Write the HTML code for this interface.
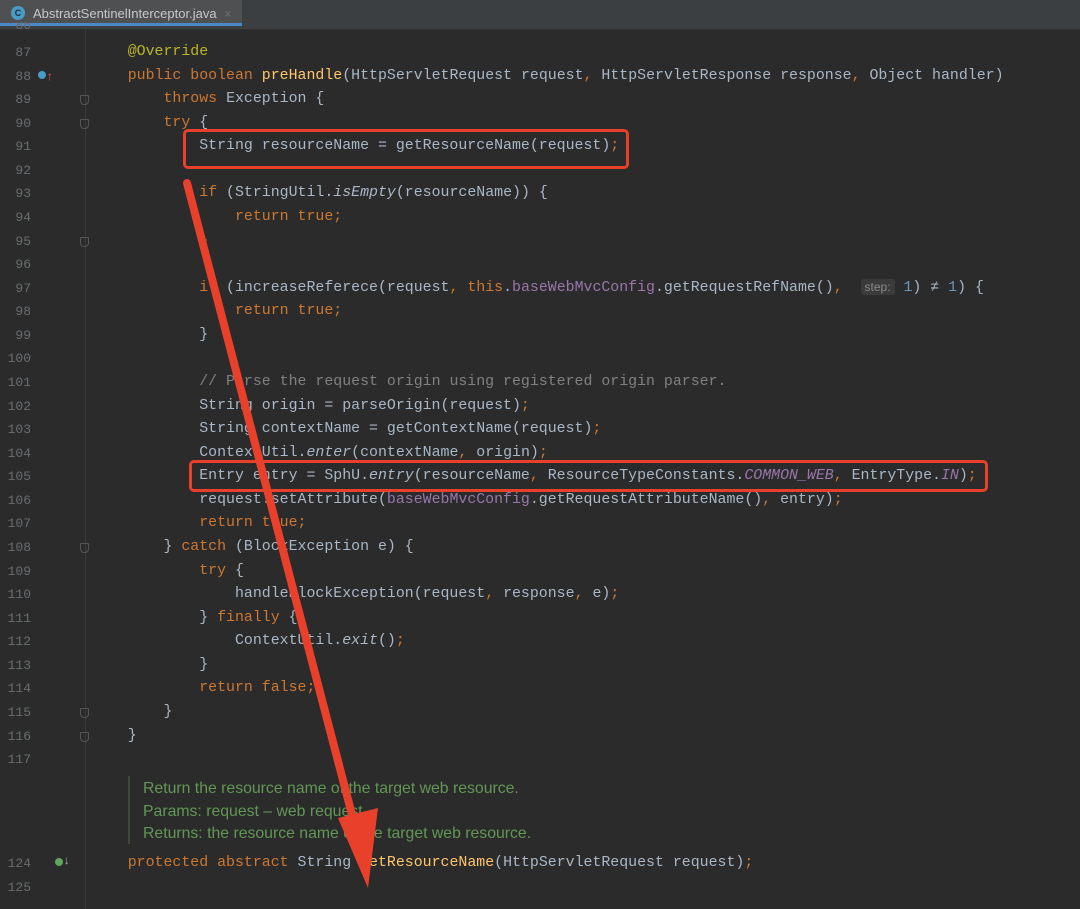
<!DOCTYPE html>
<html><head><meta charset="utf-8"><style>
body{margin:0;width:1080px;height:909px;background:#2b2b2b;overflow:hidden;position:relative;font-family:"Liberation Mono",monospace;}
.tabbar{position:absolute;left:0;top:0;width:1080px;height:29px;background:#3c3f41;border-bottom:1px solid #323232;}
.tab{position:absolute;left:0;top:0;width:242px;height:26px;background:#4e5052;border-bottom:3px solid #4a88c7;font-family:"Liberation Sans",sans-serif;font-size:13px;color:#c8c8c8;line-height:27px;padding-left:33px;box-sizing:border-box;}
.tab .ic{position:absolute;left:11px;top:6px;width:14px;height:14px;border-radius:50%;background:#4a9cc7;color:#1e2a33;font-size:9px;line-height:14px;text-align:center;font-weight:bold}
.tab .x{position:absolute;left:224px;color:#6e6e6e}
.gut{position:absolute;left:85px;top:29px;width:1px;height:880px;background:#3a3a3a}
.ln{position:absolute;left:0;width:31px;text-align:right;color:#6a6d70;font-size:13px;}
.l{position:absolute;left:128px;white-space:pre;font-size:14.9px;color:#a9b7c6;}
.k{color:#cc7832}.m{color:#ffc66d}.f{color:#9876aa}.n{color:#6897bb}.c{color:#808080}.a{color:#bbb529}.i{font-style:italic}.fi{color:#9876aa;font-style:italic}
.hint{font-family:"Liberation Sans",sans-serif;font-size:12px;color:#8a8a8a;background:#3b3b3b;border-radius:3px;padding:1px 4px;}
.doc{position:absolute;left:143px;font-family:"Liberation Sans",sans-serif;font-size:15.8px;color:#629755;}
.box{position:absolute;border:3px solid #e8402a;border-radius:5px;}
.fold{position:absolute;left:80px;width:9px;height:10px;border:1px solid #555;border-radius:1px 1px 4px 4px;box-sizing:border-box}
</style></head><body>
<div class="tabbar"><div class="tab"><span class="ic">C</span>AbstractSentinelInterceptor.java<span class="x">×</span></div></div>
<div class="gut"></div>
<div id="code"></div>
<div style="position:absolute;left:128px;top:776px;width:2px;height:68px;background:#3f4a3a"></div>
<div class="doc" style="top:780px">Return the resource name of the target web resource.</div>
<div class="doc" style="top:803px">Params:  request – web request</div>
<div class="doc" style="top:825px">Returns: the resource name of the target web resource.</div>
<div class="box" style="left:183px;top:129px;width:440px;height:34px"></div>
<div class="box" style="left:189px;top:460px;width:793px;height:26px"></div>
<svg style="position:absolute;left:0;top:0" width="1080" height="909">
<line x1="187" y1="183" x2="356" y2="830" stroke="#e8402a" stroke-width="8" stroke-linecap="round"/>
<polygon points="368,888 338,818 378,808" fill="#e8402a"/>
</svg>
<script>
const L=[
[87,'    <span class="a">@Override</span>'],
[88,'    <span class="k">public boolean </span><span class="m">preHandle</span>(HttpServletRequest request<span class="k">, </span>HttpServletResponse response<span class="k">, </span>Object handler)'],
[89,'        <span class="k">throws </span>Exception {'],
[90,'        <span class="k">try </span>{'],
[91,'            String resourceName = getResourceName(request)<span class="k">;</span>'],
[92,''],
[93,'            <span class="k">if </span>(StringUtil.<span class="i">isEmpty</span>(resourceName)) {'],
[94,'                <span class="k">return true;</span>'],
[95,'            }'],
[96,''],
[97,'            <span class="k">if </span>(increaseReferece(request<span class="k">, this</span>.<span class="f">baseWebMvcConfig</span>.getRequestRefName()<span class="k">,</span>  <span class="hint">step:</span> <span class="n">1</span>) ≠ <span class="n">1</span>) {'],
[98,'                <span class="k">return true;</span>'],
[99,'            }'],
[100,''],
[101,'            <span class="c">// Parse the request origin using registered origin parser.</span>'],
[102,'            String origin = parseOrigin(request)<span class="k">;</span>'],
[103,'            String contextName = getContextName(request)<span class="k">;</span>'],
[104,'            ContextUtil.<span class="i">enter</span>(contextName<span class="k">, </span>origin)<span class="k">;</span>'],
[105,'            Entry entry = SphU.<span class="i">entry</span>(resourceName<span class="k">, </span>ResourceTypeConstants.<span class="fi">COMMON_WEB</span><span class="k">, </span>EntryType.<span class="fi">IN</span>)<span class="k">;</span>'],
[106,'            request.setAttribute(<span class="f">baseWebMvcConfig</span>.getRequestAttributeName()<span class="k">, </span>entry)<span class="k">;</span>'],
[107,'            <span class="k">return true;</span>'],
[108,'        } <span class="k">catch </span>(BlockException e) {'],
[109,'            <span class="k">try </span>{'],
[110,'                handleBlockException(request<span class="k">, </span>response<span class="k">, </span>e)<span class="k">;</span>'],
[111,'            } <span class="k">finally </span>{'],
[112,'                ContextUtil.<span class="i">exit</span>()<span class="k">;</span>'],
[113,'            }'],
[114,'            <span class="k">return false;</span>'],
[115,'        }'],
[116,'    }'],
[117,'']];
let h='<div class="ln" style="top:22px;height:8px;overflow:hidden;line-height:8px">86</div>';
L.forEach(([n,t])=>{const y=52+(n-87)*23.57;
h+=`<div class="ln" style="top:${y-7}px">${n}</div><div class="l" style="top:${y-8}px;left:92px">${t}</div>`;});
h+=`<div class="ln" style="top:856px">124</div><div class="l" style="top:855px;left:92px">    <span class="k">protected abstract </span>String <span class="m">getResourceName</span>(HttpServletRequest request)<span class="k">;</span></div>`;
h+=`<div class="ln" style="top:880px">125</div>`;
h+='<div style="position:absolute;left:38px;top:71px;width:8px;height:8px;border-radius:50%;background:#4a9cc7"></div><div style="position:absolute;left:46px;top:70px;color:#e05555;font-size:12px">↑</div>';
h+='<div style="position:absolute;left:55px;top:858px;width:8px;height:8px;border-radius:50%;background:#5ea55e"></div><div style="position:absolute;left:63px;top:854px;color:#aaa;font-size:12px">↓</div>';
[89,90,95,108,115,116].forEach(n=>{h+=`<div class="fold" style="top:${52+(n-87)*23.57-4}px"></div>`});
document.getElementById('code').innerHTML=h;
</script>
</body></html>
